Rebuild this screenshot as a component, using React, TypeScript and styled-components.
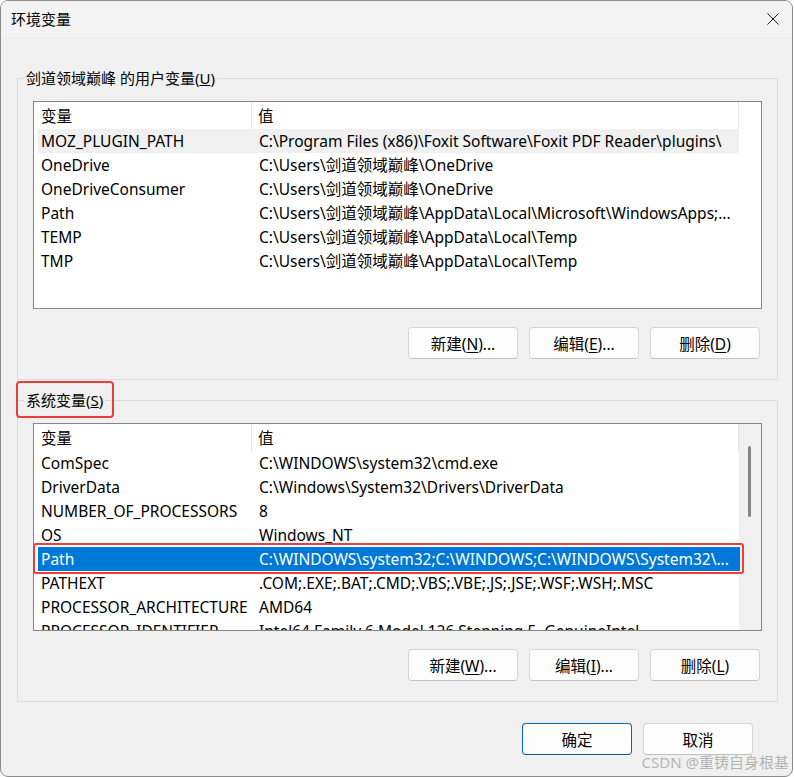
import * as React from 'react';
import styled, { createGlobalStyle } from 'styled-components';

const GlobalStyle = createGlobalStyle`
  html, body {
    margin: 0;
    padding: 0;
    background: #ffffff;
  }
  body {
    font-family: "Noto Sans", "Noto Sans CJK SC", sans-serif;
    font-size: 15.5px;
    color: #000;
  }
`;

const Window = styled.div`
  position: relative;
  width: 793px;
  height: 777px;
  box-sizing: border-box;
  border: 1px solid #8c8c8c;
  border-radius: 8px;
  background: #f0f0f0;
  overflow: hidden;
  display: flex;
  flex-direction: column;
`;

const TitleBar = styled.div`
  height: 36px;
  padding: 0 13px 0 10px;
  background: #f3f3f3;
  display: flex;
  align-items: center;
  justify-content: space-between;
`;

const Title = styled.span`
  font-size: 15px;
  line-height: 20px;
`;

const CloseIcon = styled.svg`
  width: 12px;
  height: 12px;
  display: block;
`;

const Content = styled.div`
  padding: 31px 14px 0 16px;
  display: flex;
  flex-direction: column;
  gap: 10px;
`;

const Group = styled.fieldset`
  margin: 0;
  padding: 0;
  min-width: 0;
  border: 1px solid #dcdcdc;
`;

const Legend = styled.legend`
  margin-left: 6px;
  padding: 0 2px;
  font-size: 15px;
  line-height: 20px;
`;

const Marked = styled.span`
  position: relative;
  &::after {
    content: '';
    position: absolute;
    left: -10px;
    right: -11px;
    top: -9px;
    bottom: -8px;
    border: 2px solid #ec3c3c;
    border-radius: 4px;
  }
`;

const GroupBody = styled.div`
  padding: 13px 15px 20px 15px;
  display: flex;
  flex-direction: column;
  gap: 18px;
`;

const ListBox = styled.div`
  height: 208px;
  box-sizing: border-box;
  border: 1px solid #868686;
  background: #ffffff;
  display: flex;
`;

const ListMain = styled.div`
  flex: 1;
  min-width: 0;
  padding-left: 4px;
  position: relative;
  z-index: 1;
  clip-path: inset(0 -12px 0 -12px);
`;

const ScrollStrip = styled.div<{ $active?: boolean }>`
  width: 22px;
  flex: none;
  position: relative;
  background: ${p => (p.$active ? '#f0f0f0' : '#ffffff')};
`;

const Thumb = styled.div`
  position: absolute;
  left: 9px;
  top: 22px;
  width: 3px;
  height: 71px;
  border-radius: 2px;
  background: #858585;
`;

const HeaderRow = styled.div`
  height: 27px;
  width: 701px;
  display: grid;
  grid-template-columns: 214px 487px;
`;

const HeaderCell = styled.div<{ $value?: boolean }>`
  border-right: 1px solid #e5e5e5;
  padding-left: ${p => (p.$value ? '6px' : '3px')};
  line-height: 29px;
  white-space: nowrap;
`;

const Row = styled.div<{ $hover?: boolean; $selected?: boolean }>`
  position: relative;
  height: 24px;
  width: ${p => (p.$selected ? '702px' : '701px')};
  display: grid;
  grid-template-columns: 214px 1fr;
  line-height: 25px;
  background: ${p => (p.$selected ? '#0078d7' : p.$hover ? '#f0f0f0' : 'transparent')};
  color: ${p => (p.$selected ? '#ffffff' : '#000000')};
  ${p =>
    p.$selected
      ? `&::after {
    content: '';
    position: absolute;
    left: -5px;
    right: -4px;
    top: -4px;
    bottom: -3px;
    border: 2px solid #ec3c3c;
    border-radius: 3px;
  }`
      : ''}
`;

const NameCell = styled.div`
  padding-left: 3px;
  white-space: nowrap;
  overflow: hidden;
`;

const ValueCell = styled.div`
  padding: 0 2px 0 7px;
  white-space: nowrap;
  overflow: hidden;
`;

const ButtonRow = styled.div`
  display: flex;
  justify-content: flex-end;
  gap: 11px;
  padding-right: 2px;
`;

const Button = styled.button<{ $primary?: boolean }>`
  width: 110px;
  height: 32px;
  box-sizing: border-box;
  padding: 0;
  border: 1px solid ${p => (p.$primary ? '#0067c0' : '#d5d5d5')};
  border-bottom-color: ${p => (p.$primary ? '#0058a8' : '#c2c2c2')};
  border-radius: 4px;
  background: #fdfdfd;
  font-family: inherit;
  font-size: 15.5px;
  color: #000;
  u {
    text-underline-offset: 2px;
  }
`;

const Footer = styled.div`
  margin-top: 21px;
  display: flex;
  justify-content: flex-end;
  gap: 11px;
  padding-right: 39px;
`;

const Watermark = styled.div`
  position: absolute;
  right: 3px;
  bottom: 4px;
  font-size: 15px;
  color: rgba(160, 160, 160, 0.75);
  white-space: nowrap;
`;

type Item = { name: string; value: string; hover?: boolean; selected?: boolean };

const userVars: Item[] = [
  { name: 'MOZ_PLUGIN_PATH', value: 'C:\\Program Files (x86)\\Foxit Software\\Foxit PDF Reader\\plugins\\', hover: true },
  { name: 'OneDrive', value: 'C:\\Users\\剑道领域巅峰\\OneDrive' },
  { name: 'OneDriveConsumer', value: 'C:\\Users\\剑道领域巅峰\\OneDrive' },
  { name: 'Path', value: 'C:\\Users\\剑道领域巅峰\\AppData\\Local\\Microsoft\\WindowsApps;...' },
  { name: 'TEMP', value: 'C:\\Users\\剑道领域巅峰\\AppData\\Local\\Temp' },
  { name: 'TMP', value: 'C:\\Users\\剑道领域巅峰\\AppData\\Local\\Temp' },
];

const systemVars: Item[] = [
  { name: 'ComSpec', value: 'C:\\WINDOWS\\system32\\cmd.exe' },
  { name: 'DriverData', value: 'C:\\Windows\\System32\\Drivers\\DriverData' },
  { name: 'NUMBER_OF_PROCESSORS', value: '8' },
  { name: 'OS', value: 'Windows_NT' },
  { name: 'Path', value: 'C:\\WINDOWS\\system32;C:\\WINDOWS;C:\\WINDOWS\\System32\\...', selected: true },
  { name: 'PATHEXT', value: '.COM;.EXE;.BAT;.CMD;.VBS;.VBE;.JS;.JSE;.WSF;.WSH;.MSC' },
  { name: 'PROCESSOR_ARCHITECTURE', value: 'AMD64' },
  { name: 'PROCESSOR_IDENTIFIER', value: 'Intel64 Family 6 Model 126 Stepping 5, GenuineIntel' },
];

function VarList({ items, scroll }: { items: Item[]; scroll?: boolean }) {
  return (
    <ListBox>
      <ListMain>
        <HeaderRow>
          <HeaderCell>变量</HeaderCell>
          <HeaderCell $value>值</HeaderCell>
        </HeaderRow>
        {items.map(it => (
          <Row key={it.name} $hover={it.hover} $selected={it.selected}>
            <NameCell>{it.name}</NameCell>
            <ValueCell>{it.value}</ValueCell>
          </Row>
        ))}
      </ListMain>
      <ScrollStrip $active={scroll}>{scroll && <Thumb />}</ScrollStrip>
    </ListBox>
  );
}

export default function App() {
  return (
    <>
      <GlobalStyle />
      <Window>
        <TitleBar>
          <Title>环境变量</Title>
          <CloseIcon viewBox="0 0 12 12">
            <path d="M0.5 0.5 L11.5 11.5 M11.5 0.5 L0.5 11.5" stroke="#1b1b1b" strokeWidth="1" fill="none" />
          </CloseIcon>
        </TitleBar>
        <Content>
          <Group>
            <Legend>
              剑道领域巅峰 的用户变量(<u>U</u>)
            </Legend>
            <GroupBody>
              <VarList items={userVars} />
              <ButtonRow>
                <Button>
                  新建(<u>N</u>)...
                </Button>
                <Button>
                  编辑(<u>E</u>)...
                </Button>
                <Button>
                  删除(<u>D</u>)
                </Button>
              </ButtonRow>
            </GroupBody>
          </Group>
          <Group>
            <Legend>
              <Marked>
                系统变量(<u>S</u>)
              </Marked>
            </Legend>
            <GroupBody>
              <VarList items={systemVars} scroll />
              <ButtonRow>
                <Button>
                  新建(<u>W</u>)...
                </Button>
                <Button>
                  编辑(<u>I</u>)...
                </Button>
                <Button>
                  删除(<u>L</u>)
                </Button>
              </ButtonRow>
            </GroupBody>
          </Group>
        </Content>
        <Footer>
          <Button $primary>确定</Button>
          <Button>取消</Button>
        </Footer>
        <Watermark>CSDN @重铸自身根基</Watermark>
      </Window>
    </>
  );
}
